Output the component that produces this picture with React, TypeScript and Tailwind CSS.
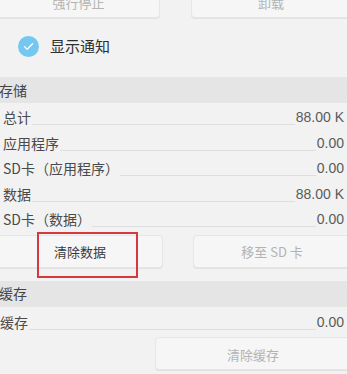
const FONT = '"Noto Sans CJK SC", "Liberation Sans", sans-serif'

type Row = { label: string; value: string }

const storageRows: Row[] = [
  { label: '总计', value: '88.00 K' },
  { label: '应用程序', value: '0.00' },
  { label: 'SD卡（应用程序）', value: '0.00' },
  { label: '数据', value: '88.00 K' },
  { label: 'SD卡（数据）', value: '0.00' },
]

function ActionButton({ label, dim, className = '' }: { label: string; dim?: boolean; className?: string }) {
  return (
    <button
      type="button"
      className={`flex h-[33px] items-center justify-center rounded-[4px] border border-[#e6e6e6] bg-[#f6f6f6] pt-[2px] text-[13px] shadow-[0_1px_0_#e2e2e2] ${
        dim ? 'text-[#b3b3b3]' : 'text-[#3a3a3a]'
      } ${className}`}
    >
      {label}
    </button>
  )
}

function InfoRow({ label, value, indent = true }: Row & { indent?: boolean }) {
  return (
    <div className={`flex h-[25.5px] items-center pr-[3px] text-[14px] text-[#4a4a4a] ${indent ? 'pl-[3px]' : 'pl-0'}`}>
      <span className="whitespace-nowrap">{label}</span>
      <span className="mx-[1px] mt-[14px] h-px flex-1 bg-[#dedede]" />
      <span className="whitespace-nowrap font-['Liberation_Sans'] text-[#5a5a5a]">{value}</span>
    </div>
  )
}

function SectionHeader({ title }: { title: string }) {
  return (
    <div className="flex h-[26px] items-center bg-[#e5e5e5] text-[14px] text-[#444]">
      <span className="-ml-[1px]">{title}</span>
    </div>
  )
}

export default function App() {
  return (
    <div className="relative h-[374px] w-[347px] overflow-hidden bg-[#f2f2f2]" style={{ fontFamily: FONT }}>
      <div className="-mt-[15px] flex gap-[31px]">
        <ActionButton label="强行停止" dim className="-ml-[3px] w-[163px]" />
        <ActionButton label="卸载" dim className="-mr-[4px] flex-1" />
      </div>

      <div className="flex h-[59px] items-center gap-[11px] pl-[18px] pb-[2px]">
        <span className="flex h-[21px] w-[21px] items-center justify-center rounded-full bg-[#74c8ef]">
          <svg width="11" height="9" viewBox="0 0 11 9" fill="none">
            <path d="M1.4 4.6 L4.2 7.2 L9.6 1.8" stroke="#fff" strokeWidth="1.3" strokeLinecap="round" strokeLinejoin="round" />
          </svg>
        </span>
        <span className="text-[15px] text-[#2e2e2e]">显示通知</span>
      </div>

      <SectionHeader title="存储" />
      <div className="pt-[2px]">
        {storageRows.map((row) => (
          <InfoRow key={row.label} {...row} />
        ))}
      </div>

      <div className="mt-[2px] flex gap-[30px]">
        <ActionButton label="清除数据" className="-ml-[3px] w-[166px]" />
        <ActionButton label="移至 SD 卡" dim className="-mr-[4px] flex-1" />
      </div>

      <div className="mt-[13px]">
        <SectionHeader title="缓存" />
      </div>
      <div className="pt-[3px]">
        <InfoRow label="缓存" value="0.00" indent={false} />
      </div>
      <div className="mt-[2px] flex justify-end">
        <ActionButton label="清除缓存" dim className="-mr-[4px] w-[196px]" />
      </div>

      {/* annotation box */}
      <div className="pointer-events-none absolute left-[37px] top-[232px] h-[46px] w-[101px] border-2 border-[#d6393d]" />
    </div>
  )
}
